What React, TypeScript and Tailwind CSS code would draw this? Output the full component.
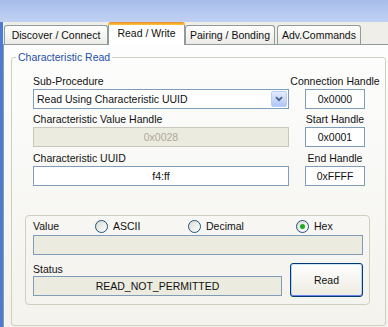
import React from "react";

function Tab({ label, width, active }: { label: string; width: string; active?: boolean }) {
  if (active) {
    return (
      <div className={`relative z-10 -mb-px flex h-[23px] flex-col ${width}`}>
        <div className="h-[3px] rounded-t-[3px] bg-gradient-to-b from-[#e68b2c] to-[#ffc73c]" />
        <div className="flex flex-1 items-start justify-center border-x border-[#919b9c] bg-white pt-[2px]">
          {label}
        </div>
      </div>
    );
  }
  return (
    <div
      className={`flex h-[19px] items-center justify-center rounded-t-[3px] border-x border-t border-[#919b9c] bg-gradient-to-b from-white to-[#ecebe6] pt-px ${width}`}
    >
      {label}
    </div>
  );
}

function Radio({ label, checked, width }: { label: string; checked?: boolean; width?: string }) {
  return (
    <div className={`flex items-center gap-[5px] ${width ?? ""}`}>
      <span className="flex h-[13px] w-[13px] items-center justify-center rounded-full border border-[#1c5180] bg-gradient-to-br from-[#dcdcd4] to-white">
        {checked && <span className="h-[5px] w-[5px] rounded-full bg-[#22a822]" />}
      </span>
      <span>{label}</span>
    </div>
  );
}

function Field({ value, disabled }: { value: string; disabled?: boolean }) {
  return (
    <div
      className={`flex h-[20px] w-[256px] items-center justify-center border ${
        disabled ? "border-[#c9c7ba] bg-[#ecebdf] text-[#aca899]" : "border-[#7f9db9] bg-white"
      }`}
    >
      {value}
    </div>
  );
}

function SmallField({ value }: { value: string }) {
  return (
    <div className="flex h-[20px] w-[60px] items-center justify-center border border-[#7f9db9] bg-white">
      {value}
    </div>
  );
}

export default function App() {
  return (
    <div className="h-[327px] w-[388px] overflow-hidden bg-[#efeee8] font-['Liberation_Sans',Arial,sans-serif] text-[10.5px] leading-[13px] text-[#111]">
      <div className="h-[22px] bg-gradient-to-b from-[#a7bdea] to-[#c0d1f2]" />
      <div className="flex h-[320px]">
        <div className="w-[3px] shrink-0 bg-[#4b7bd7]" />
        <div className="flex w-[392px] shrink-0 flex-col">
          {/* tabs */}
          <div className="flex h-[22px] items-end pl-px">
            <Tab label="Discover / Connect" width="w-[104px]" />
            <Tab label="Read / Write" width="w-[77px]" active />
            <Tab label="Pairing / Bonding" width="w-[90px]" />
            <div className="w-[2px]" />
            <Tab label="Adv.Commands" width="w-[84px]" />
          </div>

          {/* tab page */}
          <div className="flex-1 border border-[#919b9c] bg-gradient-to-b from-[#fdfdfd] to-[#f3f2ec] pl-[7px]">
            <fieldset className="mt-[6px] w-[375px] rounded-[3px] border border-[#d0d0bf] pb-[20px]">
              <legend className="ml-[4px] px-[2px] text-[#1e4fa8]">Characteristic Read</legend>

              <div className="pl-[21px] pt-[11px]">
                <div className="flex">
                  <div className="w-[256px]">
                    <div>Sub-Procedure</div>
                    <div className="mt-px flex h-[20px] w-[256px] items-center border border-[#7f9db9] bg-white pl-[3px] pr-px">
                      <span>Read Using Characteristic UUID</span>
                      <span className="ml-auto flex h-[16px] w-[16px] items-center justify-center rounded-[2px] border border-[#b9cdf5] bg-gradient-to-b from-[#e3ebfe] to-[#b0c7f6]">
                        <svg width="8" height="6" viewBox="0 0 8 6">
                          <path d="M1 1.2 L4 4.2 L7 1.2" fill="none" stroke="#4d6185" strokeWidth="1.8" />
                        </svg>
                      </span>
                    </div>
                  </div>
                  <div className="flex w-[92px] flex-col items-center">
                    <div>Connection Handle</div>
                    <div className="mt-px">
                      <SmallField value="0x0000" />
                    </div>
                  </div>
                </div>

                <div className="mt-[4px] flex">
                  <div className="w-[256px]">
                    <div>Characteristic Value Handle</div>
                    <div className="mt-px">
                      <Field value="0x0028" disabled />
                    </div>
                  </div>
                  <div className="flex w-[92px] flex-col items-center">
                    <div>Start Handle</div>
                    <div className="mt-px">
                      <SmallField value="0x0001" />
                    </div>
                  </div>
                </div>

                <div className="mt-[5px] flex">
                  <div className="w-[256px]">
                    <div>Characteristic UUID</div>
                    <div className="mt-px">
                      <Field value="f4:ff" />
                    </div>
                  </div>
                  <div className="flex w-[92px] flex-col items-center">
                    <div>End Handle</div>
                    <div className="mt-px">
                      <SmallField value="0xFFFF" />
                    </div>
                  </div>
                </div>
              </div>

              {/* value / status group */}
              <div className="ml-[13px] mt-[29px] w-[345px] rounded-[4px] border border-[#d0d0bf] pb-[7px] pl-[7px] pt-[4px]">
                <div className="flex h-[13px] items-center">
                  <div className="w-[62px]">Value</div>
                  <Radio label="ASCII" width="w-[93px]" />
                  <Radio label="Decimal" width="w-[108px]" />
                  <Radio label="Hex" checked />
                </div>
                <div className="mt-[2px] h-[20px] w-[330px] border border-[#7f9db9] bg-[#ecebdf]" />
                <div className="mt-[8px] flex">
                  <div className="w-[249px]">
                    <div>Status</div>
                    <div className="flex h-[20px] items-center justify-center border border-[#7f9db9] bg-[#ecebdf]">
                      READ_NOT_PERMITTED
                    </div>
                  </div>
                  <button className="ml-[8px] flex h-[34px] w-[73px] items-center justify-center rounded-[3px] border border-[#003c74] bg-gradient-to-b from-white to-[#eceae0] shadow-[inset_0_1px_0_#cee7ff,inset_0_-1px_0_#6982ee,inset_1px_0_0_#b8d2f8,inset_-1px_0_0_#b8d2f8]">
                    Read
                  </button>
                </div>
              </div>
            </fieldset>
          </div>
        </div>
      </div>
    </div>
  );
}
